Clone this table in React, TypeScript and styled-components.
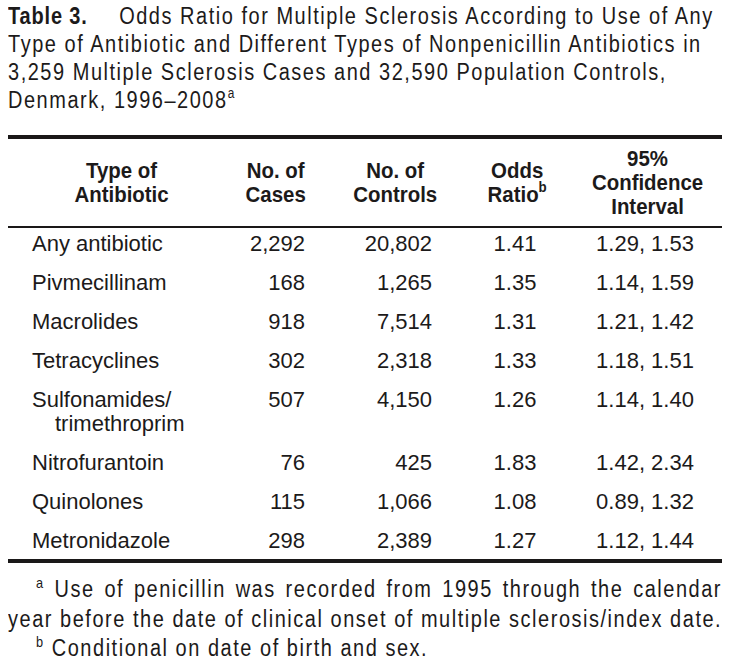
import styled, { createGlobalStyle } from "styled-components"

const GlobalStyle = createGlobalStyle`
    html, body {
        margin: 0;
        padding: 0;
        background: #ffffff;
        overflow: hidden;
    }
`

const sans = `"Liberation Sans", Arial, sans-serif`

const Page = styled.div`
    width: 714px;
    padding: 2px 13px 0 8px;
    color: #1c1a1a;
    font-family: ${sans};
`

// Helvetica Condensed look: regular face squeezed horizontally, loosely tracked
const Condensed = styled.div<{ $scale: number }>`
    width: calc(100% / ${({ $scale }) => $scale});
    transform: scaleX(${({ $scale }) => $scale});
    transform-origin: 0 0;
    letter-spacing: 1.8px;
`

const Caption = styled.div`
    font-size: 23.5px;
    line-height: 28px;
    margin-bottom: 21px;
    white-space: nowrap;
`

const CaptionLabel = styled.b`
    margin-right: 37px;
    letter-spacing: 1px;
`

const Sup = styled.sup<{ $size?: number }>`
    font-size: ${({ $size }) => $size ?? 14}px;
    line-height: 0;
    vertical-align: ${({ $size }) => ($size ? "9px" : "10px")};
`

const Table = styled.table`
    width: 714px;
    table-layout: fixed;
    border-collapse: collapse;
    border-top: 4px solid #1a1818;
    border-bottom: 4px solid #1a1818;
`

const HeadCell = styled.th<{ $pad?: number }>`
    font-weight: bold;
    font-size: 21.5px;
    line-height: 24px;
    text-align: center;
    vertical-align: middle;
    padding: 8px 0 7px ${({ $pad }) => $pad ?? 0}px;
    border-bottom: 2px solid #1a1818;
`

const HeadText = styled.span`
    display: inline-block;
    transform: scaleX(0.95);
    white-space: nowrap;
`

const Row = styled.tr`
    &:last-child td {
        padding-bottom: 6px;
    }
`

const Cell = styled.td<{ $align?: "left" | "right" | "center"; $padRight?: number; $padLeft?: number }>`
    font-size: 22px;
    line-height: 24px;
    text-align: ${({ $align }) => $align ?? "right"};
    vertical-align: top;
    padding: 4px ${({ $padRight }) => $padRight ?? 0}px 11px ${({ $padLeft }) => $padLeft ?? 0}px;
    white-space: nowrap;
`

const SubLine = styled.div`
    padding-left: 23px;
`

const Notes = styled.div`
    font-size: 23.5px;
    line-height: 29.5px;
    padding-top: 12px;
    white-space: nowrap;
`

const NoteLine = styled.div<{ $indent?: boolean; $justify?: boolean }>`
    padding-left: ${({ $indent }) => ($indent ? 33 : 0)}px;
    text-align: ${({ $justify }) => ($justify ? "justify" : "left")};
    text-align-last: ${({ $justify }) => ($justify ? "justify" : "auto")};
`

const rows = [
    { name: "Any antibiotic", cases: "2,292", controls: "20,802", or: "1.41", ci: "1.29, 1.53" },
    { name: "Pivmecillinam", cases: "168", controls: "1,265", or: "1.35", ci: "1.14, 1.59" },
    { name: "Macrolides", cases: "918", controls: "7,514", or: "1.31", ci: "1.21, 1.42" },
    { name: "Tetracyclines", cases: "302", controls: "2,318", or: "1.33", ci: "1.18, 1.51" },
    { name: "Sulfonamides/", sub: "trimethroprim", cases: "507", controls: "4,150", or: "1.26", ci: "1.14, 1.40" },
    { name: "Nitrofurantoin", cases: "76", controls: "425", or: "1.83", ci: "1.42, 2.34" },
    { name: "Quinolones", cases: "115", controls: "1,066", or: "1.08", ci: "0.89, 1.32" },
    { name: "Metronidazole", cases: "298", controls: "2,389", or: "1.27", ci: "1.12, 1.44" },
]

export default function App() {
    return (
        <Page>
            <GlobalStyle />
            <Caption>
                <Condensed $scale={0.85}>
                    <CaptionLabel>Table 3.</CaptionLabel>
                    Odds Ratio for Multiple Sclerosis According to Use of Any
                    <br />
                    Type of Antibiotic and Different Types of Nonpenicillin Antibiotics in
                    <br />
                    3,259 Multiple Sclerosis Cases and 32,590 Population Controls,
                    <br />
                    Denmark, 1996–2008<Sup>a</Sup>
                </Condensed>
            </Caption>

            <Table>
                <colgroup>
                    <col style={{ width: 228 }} />
                    <col style={{ width: 80 }} />
                    <col style={{ width: 158 }} />
                    <col style={{ width: 82 }} />
                    <col style={{ width: 166 }} />
                </colgroup>
                <thead>
                    <tr>
                        <HeadCell><HeadText>Type of<br />Antibiotic</HeadText></HeadCell>
                        <HeadCell><HeadText>No. of<br />Cases</HeadText></HeadCell>
                        <HeadCell><HeadText>No. of<br />Controls</HeadText></HeadCell>
                        <HeadCell $pad={4}><HeadText>Odds<br />Ratio<Sup>b</Sup></HeadText></HeadCell>
                        <HeadCell $pad={18}><HeadText>95%<br />Confidence<br />Interval</HeadText></HeadCell>
                    </tr>
                </thead>
                <tbody>
                    {rows.map((r) => (
                        <Row key={r.name}>
                            <Cell $align="left" $padLeft={24}>
                                {r.name}
                                {r.sub && <SubLine>{r.sub}</SubLine>}
                            </Cell>
                            <Cell $padRight={11}>{r.cases}</Cell>
                            <Cell $padRight={42}>{r.controls}</Cell>
                            <Cell $align="center">{r.or}</Cell>
                            <Cell $align="center" $padLeft={12}>{r.ci}</Cell>
                        </Row>
                    ))}
                </tbody>
            </Table>

            <Notes>
                <Condensed $scale={0.85}>
                    <NoteLine $indent $justify>
                        <Sup $size={15}>a</Sup> Use of penicillin was recorded from 1995 through the calendar
                    </NoteLine>
                    <NoteLine>year before the date of clinical onset of multiple sclerosis/index date.</NoteLine>
                    <NoteLine $indent>
                        <Sup $size={15}>b</Sup> Conditional on date of birth and sex.
                    </NoteLine>
                </Condensed>
            </Notes>
        </Page>
    )
}
